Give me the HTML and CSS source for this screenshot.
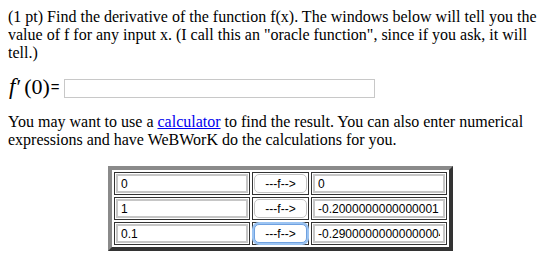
FILE: index.html
```html
<!DOCTYPE html>
<html lang="en">
<head>
    <meta charset="UTF-8">
    <title>Oracle Function</title>
    <link rel="stylesheet" href="styles.css">
</head>
<body>
    <div class="problem">
        <p class="intro">(1 pt) Find the derivative of the function f(x). The windows below will tell you the value of f for any input x. (I call this an "oracle function", since if you ask, it will tell.)</p>

        <div class="answer-row">
            <span class="math"><i>f</i><span class="prime">&prime;</span>(0)</span><span class="eq">=</span>
            <input type="text" class="answer">
        </div>

        <p class="hint">You may want to use a <a href="#">calculator</a> to find the result. You can also enter numerical expressions and have WeBWorK do the calculations for you.</p>

        <table class="oracle" border="4">
            <tr>
                <td><input type="text" class="cell-in" value="0"></td>
                <td><button class="fbtn">---f--&gt;</button></td>
                <td><input type="text" class="cell-out" value="0"></td>
            </tr>
            <tr>
                <td><input type="text" class="cell-in" value="1"></td>
                <td><button class="fbtn">---f--&gt;</button></td>
                <td><input type="text" class="cell-out" value="-0.2000000000000001"></td>
            </tr>
            <tr>
                <td><input type="text" class="cell-in" value="0.1"></td>
                <td><button class="fbtn focused">---f--&gt;</button></td>
                <td><input type="text" class="cell-out" value="-0.29000000000000004"></td>
            </tr>
        </table>
    </div>
</body>
</html>
```

FILE: styles.css
```css
body {
    margin: 8px;
    font-family: "Liberation Serif", "Times New Roman", serif;
    font-size: 16px;
    line-height: 18px;
    color: #000;
    background: #fff;
}

.intro {
    margin: 0 0 12px 0;
}

.answer-row {
    display: flex;
    align-items: center;
    height: 26px;
}

.math {
    font-family: "Liberation Serif", serif;
    font-size: 22px;
    padding-left: 1px;
}

.math i {
    font-size: 23px;
}

.prime {
    margin: 0 3px 0 1px;
}

.eq {
    font-family: "Liberation Sans", sans-serif;
    font-size: 15px;
    margin: 0 4px 0 1px;
}

.answer {
    box-sizing: border-box;
    flex-shrink: 0;
    width: 311px;
    height: 19px;
    border: 1px solid #c8c8c8;
    padding: 0 2px;
    margin: 2px 0 0 0;
}

.hint {
    margin: 13px 0 17px 0;
}

.hint a {
    color: #0000ee;
}

.oracle {
    margin: 0 0 0 100px;
    border-spacing: 2px;
    border-color: #8a8a8a #333 #333 #8a8a8a;
    border-style: solid;
}

.oracle td {
    padding: 1px;
    border: 1px solid #333;
}

.cell-in,
.cell-out {
    box-sizing: border-box;
    font-family: "Liberation Sans", Arial, sans-serif;
    font-size: 12px;
    width: 132px;
    height: 19px;
    border: 2px solid #c6c6c6;
    padding: 0 3px;
    margin: 0;
    display: block;
}

.fbtn {
    box-sizing: border-box;
    font-family: "Liberation Sans", Arial, sans-serif;
    font-size: 12px;
    width: 53px;
    height: 19px;
    background: #fff;
    border: 1px solid #c4c4c4;
    border-radius: 5px;
    margin: 0;
    padding: 0;
    display: block;
}

.fbtn.focused {
    border-color: #6fa1e0;
    box-shadow: 0 0 0 2px #9cc4f2;
}
```
